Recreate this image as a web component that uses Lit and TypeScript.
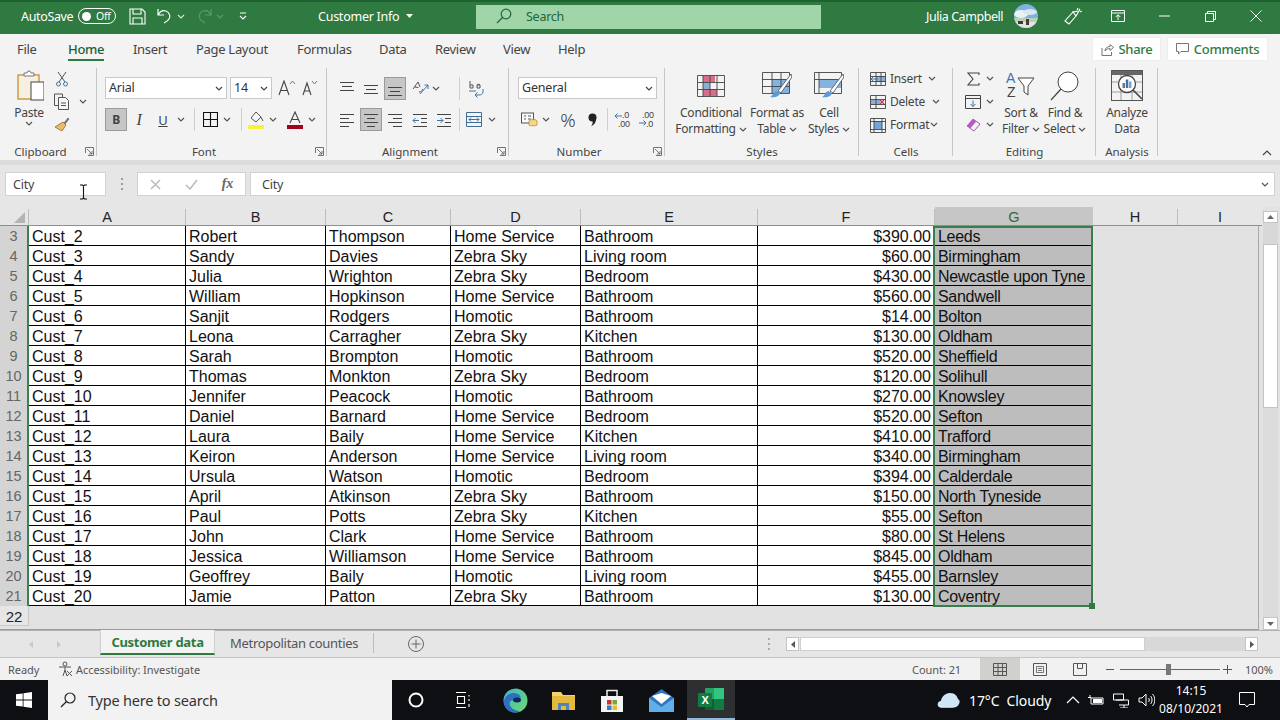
import { LitElement, html, css, svg } from "lit";
import { customElement } from "lit/decorators.js";

const G = (w: number, h: number, body: unknown, extra = "") => html`<svg class=${extra} width=${w} height=${h} viewBox="0 0 ${w} ${h}" fill="none">${body}</svg>`;
const ch = (c = "#555") => G(8, 5, svg`<path d="M1 1l3 3 3-3" stroke=${c} stroke-width="1.2"/>`);
const launcher = () => G(9, 9, svg`<path d="M.5 6V.5H8.5V8.5H3M2 2l5 5M7 4v3H4" stroke="#666" stroke-width=".9"/>`);

const rows: [string, string, string, string, string, string, string][] = [
  ["Cust_2","Robert","Thompson","Home Service","Bathroom","$390.00","Leeds"],
  ["Cust_3","Sandy","Davies","Zebra Sky","Living room","$60.00","Birmingham"],
  ["Cust_4","Julia","Wrighton","Zebra Sky","Bedroom","$430.00","Newcastle upon Tyne"],
  ["Cust_5","William","Hopkinson","Home Service","Bathroom","$560.00","Sandwell"],
  ["Cust_6","Sanjit","Rodgers","Homotic","Bathroom","$14.00","Bolton"],
  ["Cust_7","Leona","Carragher","Zebra Sky","Kitchen","$130.00","Oldham"],
  ["Cust_8","Sarah","Brompton","Homotic","Bathroom","$520.00","Sheffield"],
  ["Cust_9","Thomas","Monkton","Zebra Sky","Bedroom","$120.00","Solihull"],
  ["Cust_10","Jennifer","Peacock","Homotic","Bathroom","$270.00","Knowsley"],
  ["Cust_11","Daniel","Barnard","Home Service","Bedroom","$520.00","Sefton"],
  ["Cust_12","Laura","Baily","Home Service","Kitchen","$410.00","Trafford"],
  ["Cust_13","Keiron","Anderson","Home Service","Living room","$340.00","Birmingham"],
  ["Cust_14","Ursula","Watson","Homotic","Bedroom","$394.00","Calderdale"],
  ["Cust_15","April","Atkinson","Zebra Sky","Bathroom","$150.00","North Tyneside"],
  ["Cust_16","Paul","Potts","Zebra Sky","Kitchen","$55.00","Sefton"],
  ["Cust_17","John","Clark","Home Service","Bathroom","$80.00","St Helens"],
  ["Cust_18","Jessica","Williamson","Home Service","Bathroom","$845.00","Oldham"],
  ["Cust_19","Geoffrey","Baily","Homotic","Living room","$455.00","Barnsley"],
  ["Cust_20","Jamie","Patton","Zebra Sky","Bathroom","$130.00","Coventry"],
];

@customElement("app-root")
export class AppRoot extends LitElement {
  static styles = css`
    :host { display: block; width: 1280px; height: 720px; overflow: hidden; position: relative; background: #f3f3f3; font-family: "Noto Sans", "Open Sans", sans-serif; color: #444; font-size: 12px; letter-spacing: -.25px; }
    svg { display: block; }
    /* title bar */
    .title { height: 34px; box-sizing: border-box; border-top: 2px solid #1f6231; padding-bottom: 4px; background: #2f7a41; color: #fff; display: grid; grid-template-columns: 21px 57px 44px 30px 24px 10px 8px 22px 8px 38px 56px 158px 345px 105px 88px 24px 18px 34px 56px 36px 56px 36px; align-items: center; justify-items: start; font-size: 12.5px; letter-spacing: -.25px; }
    .title .c { justify-self: center; }
    .autosave { font-size: 12.5px; letter-spacing: -.35px; }
    .toggle { width: 38px; height: 16px; box-sizing: border-box; border: 1.3px solid #fff; border-radius: 8px; display: flex; align-items: center; gap: 5px; padding-left: 3px; font-size: 10.5px; }
    .toggle b { width: 9px; height: 9px; border-radius: 50%; background: #fff; }
    .doc { display: flex; align-items: center; gap: 7px; }
    .search { width: 345px; height: 24px; margin-top: 2px; padding-bottom: 2px; background: #9fd5a8; color: #24663a; display: flex; align-items: center; box-sizing: border-box; padding-left: 20px; gap: 14px; }
    .user { letter-spacing: -.45px; }
    /* tabs */
    .tabs { height: 32px; box-sizing: border-box; padding-bottom: 2px; display: grid; grid-template-columns: 17px 51px 65px 63px 101px 82px 56px 68px 55px 535px 75px 99px; align-items: center; justify-items: start; font-size: 13px; letter-spacing: -.3px; }
    .tab-on { color: #1f5f33; font-weight: 500; position: relative; }
    .tab-on::after { content: ""; position: absolute; left: 0; right: 0; bottom: -3px; height: 2px; background: #2f7a41; }
    .act { height: 22px; background: #fff; color: #2f7a41; display: flex; align-items: center; gap: 5px; justify-content: center; font-weight: 500; font-size: 13px; box-shadow: 0 0 1px #ccc; }
    .act.share { width: 67px; }
    .act.comm { width: 99px; }
    /* ribbon */
    .ribbon { height: 94px; display: flex; background: #f3f3f3; border-bottom: 5px solid #dcdcdc; box-sizing: content-box; position: relative; }
    .grp { display: flex; flex-direction: column; box-sizing: border-box; position: relative; }
    .grp::after { content: ""; position: absolute; right: 0; top: 2px; bottom: 4px; width: 1px; background: #c6c6c6; }
    .body { height: 77px; box-sizing: border-box; }
    .lab { height: 16px; display: flex; align-items: center; font-size: 11.5px; letter-spacing: 0; color: #444; }
    .lab span { flex: 1; text-align: center; }
    .lab i { width: 16px; display: flex; justify-content: center; }
    .w-clip { width: 97px; } .w-font { width: 230px; } .w-align { width: 182px; } .w-num { width: 156px; } .w-sty { width: 194px; } .w-cell { width: 94px; } .w-edit { width: 143px; } .w-ana { width: 62px; }
    .stack { padding-top: 11px; display: grid; grid-template-rows: 22px 22px; row-gap: 9px; }
    .row { display: grid; align-items: center; justify-items: center; height: 22px; }
    .combo { height: 22px; box-sizing: border-box; width: 100%; background: #fff; border: 1px solid #c8c8c8; display: flex; align-items: center; justify-content: space-between; padding: 0 3px 2px 3px; color: #333; font-size: 12.5px; letter-spacing: -.2px; }
    .combo svg { margin-top: 2px; }
    .on { background: #c6c6c6; border: 1px solid #9a9a9a; box-sizing: border-box; width: 22px; height: 23px; display: flex; align-items: center; justify-content: center; font-weight: 700; }
    .sep { width: 1px; height: 23px; background: #cfcfcf; }
    .fp { padding-left: 8px; }
    .f1 { grid-template-columns: 122px 3px 42px 3px 23px 23px; }
    .f2 { grid-template-columns: 22px 24px 24px 12px 14px 18px 16px 12px 18px 16px 28px 6px; }
    .ital { font-family: "Liberation Serif", serif; font-style: italic; font-size: 16px; }
    .und { text-decoration: underline; font-size: 13px; }
    .a1 { grid-template-columns: 24px 24px 24px 25px 8px 10px 18px 16px; }
    .a2 { grid-template-columns: 24px 24px 24px 25px 24px 6px 24px 12px; }
    .np { padding-left: 9px; }
    .n1 { grid-template-columns: 139px; }
    .n2 { grid-template-columns: 22px 12px 32px 16px 14px 17px 32px; }
    .pct { font-size: 19px; font-weight: 300; color: #444; line-height: 22px; letter-spacing: 0; }
    .bigs { display: flex; }
    .p-sty { padding-left: 10px; } .p-edit { padding-left: 10px; }
    .big { display: flex; flex-direction: column; align-items: center; text-align: center; line-height: 16px; color: #444; white-space: nowrap; }
    .big .ic { height: 39px; display: flex; align-items: center; justify-content: center; }
    .big .t { display: flex; align-items: center; gap: 3px; }
    .b72 { width: 72px; } .b60 { width: 60px; } .b44 { width: 44px; } .b62 { width: 62px; }
    .cellp { padding: 1px 0 0 11px; }
    .cr { display: grid; height: 23px; align-items: center; }
    .cr1 { grid-template-columns: 20px 38px 8px; }
    .cr2 { grid-template-columns: 20px 42px 8px; }
    .cr3 { grid-template-columns: 20px 40px 8px; }
    .edr { display: grid; grid-template-columns: 20px 2px 10px; height: 23px; align-items: center; justify-items: center; }
    .edsmall { width: 36px; padding-top: 1px; }
    .paste { width: 50px; margin-left: 4px; }
    .clipb { display: flex; }
    .clip-s { width: 39px; display: flex; flex-direction: column; padding-top: 1px; }
    .clip-s div { height: 23px; display: grid; grid-template-columns: 16px 9px 8px; align-items: center; justify-items: center; }
    .coll { width: 122px; display: flex; align-items: flex-end; justify-content: flex-end; padding: 0 8px 4px 0; box-sizing: border-box; }
    /* formula */
    .fbar { height: 42px; background: #e6e6e6; box-sizing: border-box; padding: 7px 5px 11px 5px; display: grid; grid-template-columns: 101px 31px 109px 4px 1025px; align-items: stretch; }
    .fbox { background: #fff; border: 1px solid #d2d2d2; display: flex; align-items: center; box-sizing: border-box; padding-left: 7px; font-size: 12.5px; color: #444; }
    .fdots { display: flex; align-items: center; justify-content: center; }
    .fx { justify-content: space-between; padding: 0 12px 0 12px; }
    .fxt { font-family: "Liberation Serif", serif; font-style: italic; font-size: 14px; font-weight: 700; color: #666; }
    .fline { justify-content: space-between; padding-right: 5px; padding-left: 11px; }
    /* sheet */
    .sheet { height: 423px; display: flex; background: #e2e2e2; position: relative; font-family: "Liberation Sans", sans-serif; color: #111; letter-spacing: 0; }
    .area { width: 1262px; }
    .colgrid { display: grid; grid-template-columns: 29px 157px 140px 125px 130px 177px 177px 158px 85px 84px; }
    .hdr { height: 19px; background: #e6e6e6; border-bottom: 1px solid #8f8f8f; box-sizing: border-box; font-size: 14.5px; line-height: 18px; text-align: center; color: #222; }
    .hdr > div { border-right: 1px solid #bdbdbd; margin-top: 2px; height: 16px; line-height: 17px; }
    .hdr > div.last { border-right: 0; }
    .hdr > div.sel { background: #c6c6c6; color: #2f6b40; margin-top: 0; height: 18px; line-height: 20px; border-right: 0; }
    .corner { display: flex; justify-content: flex-end; align-items: flex-end; padding: 0 3px 2px 0; box-sizing: border-box; }
    .rowsw { width: 1259px; height: 404px; box-sizing: border-box; border-right: 1px solid #a8a8a8; border-bottom: 1px solid #9a9a9a; }
    .r { height: 20px; grid-template-rows: 20px; font-size: 16px; line-height: 19px; white-space: nowrap; }
    .r > div { box-sizing: border-box; height: 20px; padding-top: 1px; background: #fff; border-right: 1px solid #000; border-bottom: 1px solid #000; padding-left: 3px; overflow: hidden; }
    .r > .rh { background: #d4d4d4; color: #666; border: 0; border-right: 2px solid #3f8052; padding: 1px 0 0 0; font-size: 14.5px; text-align: center; }
    .r > .num { text-align: right; padding-left: 0; padding-right: 3px; }
    .r > .g { background: #bdbdbd; overflow: visible; border-right: 0; letter-spacing: -.3px; }
    .rlast .rh22 { color: #222; font-size: 15px; text-align: center; border-right: 1px solid #c8c8c8; border-bottom: 1px solid #c8c8c8; background: #e6e6e6; }
    .selbox { position: absolute; left: 933px; top: 19px; width: 160px; height: 381px; box-sizing: border-box; border: 2px solid #3a7d4c; pointer-events: none; }
    .handle { position: absolute; right: -4px; bottom: -4px; width: 6px; height: 6px; background: #2f7a41; }
    .vs { width: 18px; display: flex; flex-direction: column; padding: 4px 2px 0 1px; box-sizing: border-box; align-items: stretch; position: relative; }
    .sbtn { background: #fff; border: 1px solid #c4c4c4; display: flex; align-items: center; justify-content: center; box-sizing: border-box; }
    .vup { height: 12px; }
    .vgap1 { height: 21px; background: #d8d8d8; }
    .vthumb { height: 164px; background: #fff; border: 1px solid #c4c4c4; box-sizing: border-box; }
    .vtrack { flex: 1; background: #dcdcdc; }
    .vdn { height: 13px; }
    /* sheet tabs */
    .stabs { height: 28px; background: #e6e6e6; border-bottom: 1px solid #c4c4c4; box-sizing: border-box; display: grid; grid-template-columns: 29px 28px 43px 115px 159px 50px 344px 18px 472px; align-items: stretch; border-top: 1px solid #b2b2b2; font-size: 13px; letter-spacing: -.3px; position: relative; }
    .stabs > * { display: flex; align-items: center; }
    .tab1 { background: #f3f3f3; color: #2f7a41; font-weight: 700; justify-content: center; border-bottom: 2px solid #2f7a41; border-left: 1px solid #cfcfcf; border-right: 1px solid #cfcfcf; height: 25px; box-sizing: border-box; margin-top: -1px; }
    .tab2 { color: #555; height: 20px; margin-top: 2px; justify-content: flex-start; padding-left: 15px; border-right: 1px solid #bcbcbc; box-sizing: border-box; }
    .add { justify-content: flex-end; }
    .hbar { height: 14px; margin-top: 6px; align-items: stretch !important; }
    .hbtn { width: 13px; }
    .hthumb { width: 345px; margin-left: 1px; background: #fff; border: 1px solid #cfcfcf; box-sizing: border-box; }
    .htrack { flex: 1; background: #d8d8d8; }
    /* status */
    .status { height: 22px; background: #f1f1f1; display: grid; grid-template-columns: 58px 18px 836px 68px 40px 40px 40px 20px 100px 14px 1fr; align-items: center; font-size: 11px; letter-spacing: -.05px; color: #555; }
    .status .pad { padding-left: 8px; }
    .status > svg { justify-self: center; }
    .status > svg.ai { justify-self: start; }
    .vb { height: 22px; display: flex; align-items: center; justify-content: center; }
    .vb.on2 { background: #d0d0cc; }
    .slider { height: 1px; background: #666; position: relative; }
    .slider i { position: absolute; left: 46px; top: -5px; width: 5px; height: 11px; background: #777; }
    .zm { margin-left: 11px; }
    /* taskbar */
    .task { height: 40px; background: #0e0f12; color: #fff; display: grid; grid-template-columns: 48px 344px 48px 46px 58px 38px 60px 38px 62px 218px 106px 14px 32px 18px 32px 58px 54px 6px; align-items: center; justify-items: center; font-size: 14px; letter-spacing: -.1px; }
    .tsearch { width: 100%; height: 40px; background: #f2f2f2; color: #333; display: flex; align-items: center; gap: 12px; padding-left: 12px; box-sizing: border-box; font-size: 14.5px; letter-spacing: -.2px; }
    .tx { height: 40px; width: 48px; background: #2e2f30; box-sizing: border-box; border-bottom: 2px solid #8fb8dc; display: flex; align-items: center; justify-content: center; }
    .wx { justify-self: end; }
    .tmp { justify-self: start; white-space: nowrap; margin-left: 9px; }
    .clock { text-align: center; font-size: 12px; line-height: 18px; white-space: nowrap; letter-spacing: 0; }
    .cursor { position: absolute; left: 79px; top: 184px; }
  `;

  private hdrs = ["A", "B", "C", "D", "E", "F", "G", "H", "I"];

  render() {
    return html`
      ${this.titleBar()}
      ${this.tabsBar()}
      ${this.ribbon()}
      ${this.formula()}
      ${this.sheet()}
      ${this.sheetTabs()}
      ${this.status()}
      ${this.task()}
      <svg class="cursor" width="9" height="16" viewBox="0 0 9 16" fill="none"><path d="M1 1h2.500l1 1 1-1H8M4.500 2v12M1 15h2.500l1-1 1 1H8" stroke="#111" stroke-width="1.100"/></svg>
    `;
  }

  titleBar() {
    const w = "#fff";
    return html`<div class="title">
      <span></span>
      <span class="autosave">AutoSave</span>
      <span class="toggle"><b></b>Off</span>
      ${G(17, 17, svg`<path d="M1 1h12l3 3v12H1zM4 1v5h8V1M4 16v-6h9v6" stroke=${w} stroke-width="1.100"/>`, "c")}
      ${G(14, 16, svg`<path d="M1 1v6h6M1.300 7C3 3 6 2 9 3c4 1.500 4.500 6 3 8-1 2-3 3-5 4" stroke=${w} stroke-width="1.200"/>`, "c")}
      <span class="c">${ch("#d5e5d8")}</span>
      <span></span>
      ${G(14, 16, svg`<path d="M13 1v6H7M12.700 7C11 3 8 2 5 3c-4 1.500-4.500 6-3 8 1 2 3 3 5 4" stroke="#5d9a6d" stroke-width="1.200"/>`, "c")}
      <span class="c">${ch("#5d9a6d")}</span>
      ${G(8, 9, svg`<path d="M1 1h6M1 4l3 3 3-3" stroke=${w} stroke-width="1.100"/>`, "c")}
      <span></span>
      <span class="doc">Customer Info ${G(7, 4, svg`<path d="M0 0h7L3.500 4z" fill="#fff"/>`)}</span>
      <span class="search">
        ${G(16, 16, svg`<circle cx="10" cy="6" r="4.800" stroke="#24663a" stroke-width="1.200"/><path d="M6.500 9.500L1 15" stroke="#24663a" stroke-width="1.200"/>`)}
        Search
      </span>
      <span></span>
      <span class="user">Julia Campbell</span>
      ${G(24, 24, svg`<defs><clipPath id="av"><circle cx="12" cy="12" r="12"/></clipPath></defs>
        <g clip-path="url(#av)"><rect width="24" height="24" fill="#7fb2dc"/><ellipse cx="7" cy="10" rx="7" ry="4" fill="#e9f1f6"/><ellipse cx="16" cy="8" rx="7" ry="3" fill="#d7e6f0"/><rect y="14" width="24" height="5" fill="#bcd0b8"/><rect y="18" width="24" height="6" fill="#e4e4de"/><rect x="4" y="17" width="5" height="3" fill="#3a3a34"/><rect x="12" y="15" width="3" height="6" fill="#4a3c30"/></g>`)}
      <span></span>
      ${G(18, 18, svg`<path d="M1 14l4 3 7-8-3-4zM9 5l3 4 3-5zM14 1l-1 2M16 5l2-1M16 2l-1 1" stroke=${w} stroke-width="1.100"/>`, "c")}
      ${G(14, 12, svg`<path d="M.5.500h13v11H.500zM.500 3h13M7 10V5M4.700 7L7 4.700 9.300 7" stroke=${w}/>`, "c")}
      ${G(11, 2, svg`<path d="M0 1h11" stroke=${w}/>`, "c")}
      ${G(11, 11, svg`<path d="M.5 2.500h8v8h-8zM2.500 2.500V.5h8v8H8.500" stroke=${w}/>`, "c")}
      ${G(12, 12, svg`<path d="M.5.500l11 11M11.500.500l-11 11" stroke=${w}/>`, "c")}
    </div>`;
  }

  tabsBar() {
    return html`<div class="tabs">
      <span></span>
      <span>File</span><span class="tab-on">Home</span><span>Insert</span><span>Page Layout</span><span>Formulas</span><span>Data</span><span>Review</span><span>View</span>
      <span>Help</span>
      <span class="act share">${G(13, 13, svg`<path d="M1 5v7.500h9.500V9M4 8c0-3 2.500-4.500 5-4.500V1.500l3.500 3-3.500 3V5.500C7 5.500 5 6.500 4 8z" stroke="#666" stroke-width=".9"/>`)}Share</span>
      <span class="act comm">${G(13, 12, svg`<path d="M.5.500h12v8H5L2.500 11V8.500h-2z" stroke="#666" stroke-width=".9"/>`)}Comments</span>
    </div>`;
  }

  ribbon() {
    return html`<div class="ribbon">
      <div class="grp w-clip">
        <div class="body clipb">
          <div class="big paste">
            <div class="ic">${G(30, 32, svg`<rect x="4" y="5" width="21" height="24" fill="#f6efe2" stroke="#d29b45" stroke-width="1.500"/><path d="M10 5V3h3l1-2h2l1 2h3v3H10z" fill="#fff" stroke="#777"/><rect x="17" y="12" width="13" height="18" fill="#fff" stroke="#444"/>`)}</div>
            <div>Paste</div>
            <div class="t">${ch()}</div>
          </div>
          <div class="clip-s">
            <div>${G(12, 16, svg`<path d="M2 1l7 10M10 1L3 11" stroke="#555"/><circle cx="2.500" cy="13" r="2" stroke="#3f74a8"/><circle cx="9.500" cy="13" r="2" stroke="#3f74a8"/>`)}</div>
            <div>${G(16, 17, svg`<path d="M4 12.500H.5V1h8v3" stroke="#555"/><path d="M4.500 4.500h7l3 3v9h-10zM7 10h5M7 12.500h5" stroke="#555" fill="#f6f6f6"/>`)}<span></span>${ch()}</div>
            <div>${G(16, 16, svg`<path d="M10 6l4-5 1 1-4 5z" fill="#777" stroke="#555" stroke-width=".6"/><path d="M9 5l3 3-4 6-7-4z" fill="#e9bd6c" stroke="#8b6a2d" stroke-width=".8"/>`)}</div>
          </div>
        </div>
        <div class="lab"><span>Clipboard</span><i>${launcher()}</i></div>
      </div>

      <div class="grp w-font">
        <div class="body stack fp">
          <div class="row f1">
            <div class="combo">Arial ${ch("#444")}</div><span></span>
            <div class="combo">14 ${ch("#444")}</div><span></span>
            ${G(18, 16, svg`<path d="M1 15L6 1l5 14M2.800 10.500h6.400" stroke="#444" stroke-width="1.100"/><path d="M12 4l2.500-3L17 4" stroke="#777"/>`)}
            ${G(17, 16, svg`<path d="M2 15L6 3l4 12M3.500 11h5" stroke="#444" stroke-width="1.100"/><path d="M11 1l2.500 3L16 1" stroke="#777"/>`)}
          </div>
          <div class="row f2">
            <div class="on">B</div>
            <span class="ital">I</span>
            <span class="und">U</span>
            ${ch()}
            <i class="sep"></i>
            ${G(15, 15, svg`<path d="M.5.500h14v14H.500zM7.500.500v14M.500 7.500h14" stroke="#111" stroke-width="1.100"/>`)}
            ${ch()}
            <i class="sep"></i>
            ${G(16, 18, svg`<path d="M3 7l5-6 5 5-5 5z" stroke="#555" fill="#f6f6f6"/><path d="M13 6l2 4" stroke="#555"/><rect y="14" width="16" height="4" fill="#f4f23a"/>`)}
            ${ch()}
            ${G(16, 18, svg`<path d="M3 12L8 1l5 11M4.800 8.500h6.400" stroke="#444" stroke-width="1.100"/><rect y="14" width="16" height="4" fill="#a4001e"/>`)}
            ${ch()}
          </div>
        </div>
        <div class="lab"><span>Font</span><i>${launcher()}</i></div>
      </div>

      <div class="grp w-align">
        <div class="body stack fp">
          <div class="row a1">
            ${G(16, 16, svg`<path d="M1 1.500h14M3 5.500h10M1 9.500h14" stroke="#444"/>`)}
            ${G(16, 16, svg`<path d="M1 4.500h14M3 8.500h10M1 12.500h14" stroke="#444"/>`)}
            <div class="on">${G(16, 16, svg`<path d="M1 6.500h14M3 10.500h10M1 14.500h14" stroke="#444"/>`)}</div>
            ${G(18, 17, svg`<path d="M2 9l5-7 2 5M3.500 7l4 .5" stroke="#555"/><path d="M8 12c2 0 3-1 4-3" stroke="#555"/><path d="M9 14L17 5M13.500 5H17V9" stroke="#3f74a8"/>`)}
            ${ch()}
            <span></span>
            <i class="sep"></i>
            ${G(16, 18, svg`<path d="M2 1v7M2 5h3v3H2M9 5h3v3H9M9 8V5c0-1 3-1 3 0" stroke="#555"/><path d="M1 11h7M15 9v3c0 2-2 3-4 3H7M9.500 12.500L7 15l2.500 2.500" stroke="#3f74a8"/>`)}
          </div>
          <div class="row a2">
            ${G(16, 14, svg`<path d="M1 1.500h14M1 5.500h9M1 9.500h14M1 13.500h9" stroke="#444"/>`)}
            <div class="on">${G(16, 14, svg`<path d="M1 1.500h14M4 5.500h8M1 9.500h14M4 13.500h8" stroke="#444"/>`)}</div>
            ${G(16, 14, svg`<path d="M1 1.500h14M6 5.500h9M1 9.500h14M6 13.500h9" stroke="#444"/>`)}
            ${G(16, 14, svg`<path d="M1 1.500h14M9 5.500h6M9 9.500h6M1 13.500h14" stroke="#444"/><path d="M7 7.500H1M3.500 5L1 7.500 3.500 10" stroke="#3f74a8"/>`)}
            ${G(16, 14, svg`<path d="M1 1.500h14M9 5.500h6M9 9.500h6M1 13.500h14" stroke="#444"/><path d="M1 7.500h6M4.500 5L7 7.500 4.500 10" stroke="#3f74a8"/>`)}
            <i class="sep"></i>
            ${G(16, 15, svg`<path d="M.5.500h15v14H.500zM.500 4.500h15M.500 10.500h15" stroke="#3f6f98"/><path d="M3 7.500h10M5 5.500l-2 2 2 2M11 5.500l2 2-2 2" stroke="#3f74a8"/>`)}
            ${ch()}
          </div>
        </div>
        <div class="lab"><span>Alignment</span><i>${launcher()}</i></div>
      </div>

      <div class="grp w-num">
        <div class="body stack np">
          <div class="row n1"><div class="combo">General ${ch("#444")}</div></div>
          <div class="row n2">
            ${G(17, 15, svg`<rect x=".5" y="1" width="12" height="10" stroke="#555" fill="#fafafa"/><path d="M3 4h2M3 7h2M7 4h3M7 7h3" stroke="#555"/><ellipse cx="12" cy="9" rx="4" ry="1.500" fill="#f4d58a" stroke="#c98a1c" stroke-width=".8"/><path d="M8 9v4c0 1 8 1 8 0V9" fill="#f4d58a" stroke="#c98a1c" stroke-width=".8"/>`)}
            ${ch()}
            <span class="pct">%</span>
            ${G(9, 14, svg`<circle cx="4.500" cy="4.500" r="4" fill="#222"/><path d="M8 5c.5 4-2 7-5 8.500 1.500-2 2-4 1.500-6z" fill="#222"/>`)}
            <i class="sep"></i>
            ${G(20, 20, svg`<path d="M9 6H2M4.500 3.500L2 6l2.500 2.500" stroke="#3f74a8"/><text x="9" y="8" font-size="9" fill="#444" font-family="Liberation Sans">.0</text><text x="5" y="17" font-size="9" fill="#444" font-family="Liberation Sans">.00</text>`)}
            ${G(20, 20, svg`<text x="5" y="8" font-size="9" fill="#444" font-family="Liberation Sans">.00</text><path d="M2 13h7M6.500 10.500L9 13l-2.500 2.500" stroke="#3f74a8"/><text x="9" y="17" font-size="9" fill="#444" font-family="Liberation Sans">.0</text>`)}
          </div>
        </div>
        <div class="lab"><span>Number</span><i>${launcher()}</i></div>
      </div>

      <div class="grp w-sty">
        <div class="body bigs p-sty">
          <div class="big b72">
            <div class="ic">${G(28, 22, svg`<rect x="6" y="1" width="12" height="6" fill="#d96d8c"/><rect x="6" y="7" width="7" height="7" fill="#8ab0d8"/><rect x="6" y="14" width="14" height="7" fill="#d96d8c"/><path d="M.5.500h27v21H.500zM6 .5v21M13 .5v21M20 .5v21M.500 7.500h27M.500 14.500h27" stroke="#444" stroke-width=".9"/>`)}</div>
            <div>Conditional</div><div class="t">Formatting ${ch()}</div>
          </div>
          <div class="big b60">
            <div class="ic">${G(30, 27, svg`<rect x="10" y="7" width="18" height="14" fill="#85b3e0"/><path d="M.5.500h27v21H.500zM.500 7.500h27M.500 14.500h27M10 .5v21M19 .5v21" stroke="#444" stroke-width=".9"/><path d="M29 2L16 19l3 2L30 5z" fill="#fff" stroke="#5a6a78"/><path d="M14 19c-3 1-3 5-6 6 4 1 9 0 10-4z" fill="#5d9ad4"/>`)}</div>
            <div>Format as</div><div class="t">Table ${ch()}</div>
          </div>
          <div class="big b44">
            <div class="ic">${G(30, 27, svg`<rect x="5" y="7" width="23" height="9" fill="#85b3e0"/><path d="M.5.500h27v21H.500zM.500 7.500h27M5 .5v21" stroke="#444" stroke-width=".9"/><path d="M29 2L16 19l3 2L30 5z" fill="#fff" stroke="#5a6a78"/><path d="M14 19c-3 1-3 5-6 6 4 1 9 0 10-4z" fill="#5d9ad4"/>`)}</div>
            <div>Cell</div><div class="t">Styles ${ch()}</div>
          </div>
        </div>
        <div class="lab"><span>Styles</span></div>
      </div>

      <div class="grp w-cell">
        <div class="body cellp">
          <div class="cr cr1">${G(16, 14, svg`<rect x="6" y="4" width="9" height="6" fill="#8ab0d8"/><path d="M.5.500h15v13H.500zM.500 4.500h15M.500 9.500h15M6 .5v13M11 .5v13" stroke="#444" stroke-width=".9"/><path d="M8 7H1M3.500 4.500L1 7l2.500 2.500" stroke="#3f74a8"/>`)}<span>Insert</span>${ch()}</div>
          <div class="cr cr2">${G(16, 14, svg`<rect x="1" y="5" width="9" height="4" fill="#8ab0d8"/><path d="M.5.500h15v13H.500zM.500 4.500h15M.500 9.500h15M6 .5v13" stroke="#444" stroke-width=".9"/><path d="M10 5l4 4M14 5l-4 4" stroke="#c0355a" stroke-width="1.200"/>`)}<span>Delete</span>${ch()}</div>
          <div class="cr cr3">${G(16, 16, svg`<rect x="4" y="4" width="8" height="8" fill="#6fa6dc"/><path d="M.5 1.500h15v14H.500zM.500 4.500h15M.500 12.500h15M4 1.500v14M12 1.500v14" stroke="#444" stroke-width=".9"/>`)}<span>Format</span>${ch()}</div>
        </div>
        <div class="lab"><span>Cells</span></div>
      </div>

      <div class="grp w-edit">
        <div class="body bigs p-edit">
          <div class="edsmall">
            <div class="edr">${G(13, 14, svg`<path d="M12 3V1H1l5 6-5 6h11v-2" stroke="#444" stroke-width="1.100"/>`)}<span></span>${ch()}</div>
            <div class="edr">${G(16, 14, svg`<path d="M.5.500h15v13H.500zM.500 3.500h15" stroke="#444"/><path d="M8 5.500v6M5.500 9L8 11.500 10.500 9" stroke="#3f74a8"/>`)}<span></span>${ch()}</div>
            <div class="edr">${G(15, 14, svg`<path d="M7 1l7 5-6 7-7-5z" fill="#b45fc0" stroke="#8f3e9c" stroke-width=".6"/><path d="M10 3.200l4 2.800-6 7-4-2.800z" fill="#f6eef8" stroke="#8f3e9c" stroke-width=".6"/>`)}<span></span>${ch()}</div>
          </div>
          <div class="big b44">
            <div class="ic">${G(30, 32, svg`<text x="0" y="13" font-size="14" fill="#3f74a8" font-family="Liberation Sans">A</text><text x="1" y="27" font-size="14" fill="#444" font-family="Liberation Sans">Z</text><path d="M12 8h16l-6 8v9l-4-3v-6z" stroke="#444" fill="#fff"/>`)}</div>
            <div>Sort &amp;</div><div class="t">Filter ${ch()}</div>
          </div>
          <div class="big b44">
            <div class="ic">${G(30, 30, svg`<circle cx="18" cy="11" r="10" stroke="#444" fill="#fff"/><path d="M11 18L1 29" stroke="#444" stroke-width="1.200"/>`)}</div>
            <div>Find &amp;</div><div class="t">Select ${ch()}</div>
          </div>
        </div>
        <div class="lab"><span>Editing</span></div>
      </div>

      <div class="grp w-ana">
        <div class="body bigs">
          <div class="big b62">
            <div class="ic">${G(33, 32, svg`<rect x=".5" y=".5" width="31" height="30" fill="#f3f3f3" stroke="#555"/><rect x="1" y="1" width="30" height="4" fill="#666"/><path d="M1 12h30M1 22h30M10 5v25M21 5v25" stroke="#888" stroke-width=".8"/><circle cx="16" cy="14" r="8.500" fill="#fff" stroke="#444" stroke-width="1.300"/><rect x="11.500" y="13" width="2.500" height="5" fill="#777"/><rect x="14.800" y="9.500" width="2.500" height="8.500" fill="#3f74a8"/><rect x="18" y="11.500" width="2.500" height="6.500" fill="#6fa6dc"/><path d="M22 20l9 9" stroke="#444" stroke-width="1.600"/>`)}</div>
            <div>Analyze</div><div>Data</div>
          </div>
        </div>
        <div class="lab"><span>Analysis</span></div>
      </div>

      <div class="coll">${G(10, 6, svg`<path d="M1 5l4-4 4 4" stroke="#444" stroke-width="1.200"/>`)}</div>
    </div>`;
  }

  formula() {
    return html`<div class="fbar">
      <div class="fbox">City</div>
      <div class="fdots">${G(2, 12, svg`<path d="M1 0v2M1 5v2M1 10v2" stroke="#999" stroke-width="2"/>`)}</div>
      <div class="fbox fx">
        ${G(11, 11, svg`<path d="M1 1l9 9M10 1l-9 9" stroke="#bdbdbd" stroke-width="1.600"/>`)}
        ${G(13, 11, svg`<path d="M1 6l4 4 7-9" stroke="#bdbdbd" stroke-width="1.600"/>`)}
        <span class="fxt">fx</span>
      </div>
      <span></span>
      <div class="fbox fline">City ${ch("#555")}</div>
    </div>`;
  }

  sheet() {
    return html`<div class="sheet">
      <div class="area">
        <div class="colgrid hdr">
          <div class="corner">${G(11, 11, svg`<path d="M11 0v11H0z" fill="#b4b4b4"/>`)}</div>
          ${this.hdrs.map((h) => html`<div class=${h === "G" ? "sel" : h === "I" ? "last" : ""}>${h}</div>`)}
        </div>
        <div class="rowsw">
          ${rows.map((r, i) => html`<div class="colgrid r">
            <div class="rh">${i + 3}</div>
            ${r.map((c, j) => html`<div class=${j === 5 ? "num" : j === 6 ? "g" : ""}>${c}</div>`)}
          </div>`)}
          <div class="colgrid r rlast"><div class="rh22 rh">22</div></div>
        </div>
      </div>
      <div class="vs">
        <div class="sbtn vup">${G(7, 4, svg`<path d="M3.500 0L7 4H0z" fill="#666"/>`)}</div>
        <div class="vgap1"></div>
        <div class="vthumb"></div>
        <div class="vtrack"></div>
        <div class="sbtn vdn">${G(7, 4, svg`<path d="M3.500 4L7 0H0z" fill="#666"/>`)}</div>
      </div>
      <div class="selbox"><div class="handle"></div></div>
    </div>`;
  }

  sheetTabs() {
    return html`<div class="stabs">
      <span></span>
      <span>${G(4, 7, svg`<path d="M0 3.500L4 0v7z" fill="#c8c8c8"/>`)}</span>
      <span>${G(4, 7, svg`<path d="M4 3.500L0 0v7z" fill="#c8c8c8"/>`)}</span>
      <span class="tab1">Customer data</span>
      <span class="tab2">Metropolitan counties</span>
      <span class="add">${G(16, 16, svg`<circle cx="8" cy="8" r="7.500" stroke="#666"/><path d="M8 3.500v9M3.500 8h9" stroke="#666"/>`)}</span>
      <span></span>
      <span>${G(2, 12, svg`<path d="M1 0v2M1 5v2M1 10v2" stroke="#aaa" stroke-width="2"/>`)}</span>
      <div class="hbar">
        <div class="sbtn hbtn">${G(4, 7, svg`<path d="M0 3.500L4 0v7z" fill="#555"/>`)}</div>
        <div class="hthumb"></div>
        <div class="htrack"></div>
        <div class="sbtn hbtn">${G(4, 7, svg`<path d="M4 3.500L0 0v7z" fill="#555"/>`)}</div>
      </div>
    </div>`;
  }

  status() {
    return html`<div class="status">
      <span class="pad">Ready</span>
      ${G(15, 16, svg`<circle cx="7" cy="3" r="2" stroke="#555"/><path d="M1 6h12M7 6v3M5 15l2-6 2 6" stroke="#555"/><path d="M9 10l5 5M14 10l-5 5" stroke="#555"/>`, "ai")}
      <span>Accessibility: Investigate</span>
      <span>Count: 21</span>
      <span class="vb on2">${G(14, 13, svg`<path d="M.5.500h13v12H.500zM.500 4.500h13M.500 8.500h13M5 .5v12M9.500 .5v12" stroke="#555"/>`)}</span>
      <span class="vb">${G(14, 13, svg`<path d="M.5.500h13v12H.500z" stroke="#555"/><path d="M3.500 3.500h7v6h-7zM5 5.500h4M5 7.500h4" stroke="#555" stroke-width=".8"/>`)}</span>
      <span class="vb">${G(14, 13, svg`<path d="M.5.500h13v12H.500zM4.500 .5v5h5v-5" stroke="#555"/>`)}</span>
      ${G(8, 1, svg`<path d="M0 .5h8" stroke="#555"/>`)}
      <span class="slider"><i></i></span>
      ${G(9, 9, svg`<path d="M0 4.500h9M4.500 0v9" stroke="#555"/>`)}
      <span class="zm">100%</span>
    </div>`;
  }

  task() {
    return html`<div class="task">
      ${G(16, 16, svg`<path d="M0 2.300l6.700-.9V7.600H0zM7.500 1.300L16 0v7.600H7.500zM0 8.400h6.700v6.200L0 13.700zM7.500 8.400H16V16l-8.500-1.200z" fill="#fff"/>`)}
      <div class="tsearch">
        ${G(16, 16, svg`<circle cx="10" cy="6" r="5" stroke="#222" stroke-width="1.200"/><path d="M6.500 9.500L1 15" stroke="#222" stroke-width="1.200"/>`)}
        Type here to search
      </div>
      ${G(16, 16, svg`<circle cx="8" cy="8" r="6.500" stroke="#fff" stroke-width="2"/>`)}
      ${G(16, 16, svg`<path d="M1 .5h10M2.500 4.500h7v7h-7zM1 15.500h10M14 3v1.500M14 7v2M14 12v3" stroke="#fff" stroke-width="1.100"/>`)}
      ${G(25, 25, svg`<defs><linearGradient id="ed" x1="0" y1="0" x2="1" y2="1"><stop offset="0" stop-color="#3fb5c9"/><stop offset="1" stop-color="#6fdc6c"/></linearGradient></defs><circle cx="12.500" cy="12.500" r="12" fill="url(#ed)"/><path d="M1 14C1 7 9 3 15 6c4 2 3 7 0 7-4 0-6-2-8 1-2 4 3 9 10 9-2 1-3 1.500-5 1.500C6 24.500 1 20 1 14z" fill="#2f6fc0"/><ellipse cx="14" cy="12" rx="4" ry="2.500" fill="#0e2a5a"/>`)}
      ${G(23, 20, svg`<path d="M0 2h9l2 3h12v15H0z" fill="#f4d36a"/><path d="M0 6h23v14H0z" fill="#e4b93f"/><path d="M6 20v-7h11v7h-3v-4H9v4z" fill="#4f83b8"/>`)}
      ${G(24, 24, svg`<path d="M1 8h22v16H1z" fill="#f4f4f4"/><path d="M7 9V2.500h10V9" stroke="#eee" stroke-width="1.500"/><rect x="7" y="12" width="4.500" height="4.500" fill="#c9352b"/><rect x="12.500" y="12" width="4.500" height="4.500" fill="#7da33b"/><rect x="7" y="17.500" width="4.500" height="4.500" fill="#2d7fc9"/><rect x="12.500" y="17.500" width="4.500" height="4.500" fill="#eeb82c"/>`)}
      ${G(25, 23, svg`<path d="M0 9L12.500 0 25 9v14H0z" fill="#2f75c4"/><path d="M0 9l12.500 9L25 9v14H0z" fill="#62aee6"/><path d="M3 7l9.500-3L22 7l-9.500 8z" fill="#fff"/>`)}
      <div class="tx">${G(26, 22, svg`<rect x="7" y="0" width="19" height="22" rx="1" fill="#21a366"/><rect x="16" y="0" width="10" height="11" fill="#33c481"/><rect x="16" y="11" width="10" height="11" fill="#107c41"/><rect x="7" y="11" width="9" height="11" fill="#185c37"/><rect x="0" y="5" width="14" height="14" rx="1" fill="#107c41"/><text x="3.500" y="16" font-size="11" font-weight="700" fill="#fff" font-family="Liberation Sans">X</text>`)}</div>
      <span class="wx">${G(23, 16, svg`<path d="M4 15.500C1 15.500 0 13 1 11c.5-1.500 2-2 3-2 .5-4 4-8 9-8s7 3 8 6c2 1 2 3 1 5-1 2-3 3.500-5 3.500z" fill="#cfe6f5"/><path d="M2 14c3 1 10 1.500 16 .5-2 1-3 1-5 1H4z" fill="#fff"/>`)}</span>
      <span class="tmp">17°C&nbsp;&nbsp;Cloudy</span>
      ${G(14, 8, svg`<path d="M1 7l6-6 6 6" stroke="#fff" stroke-width="1.200"/>`)}
      ${G(16, 11, svg`<path d="M3 3h12v6H3z" stroke="#fff"/><rect x="5" y="4" width="9" height="4" fill="#fff"/><path d="M0 2.500h3M2 0v3" stroke="#fff"/>`)}
      ${G(16, 15, svg`<path d="M.5 1h10v6H.500zM3 7h12.500v5H6M11 12v3M7 15h8" stroke="#fff"/>`)}
      ${G(17, 14, svg`<path d="M1 5h3l4-4v12L4 9H1zM10.500 5c1 1 1 3 0 4M12.500 3c2 2 2 6 0 8M14.500 1c3 3 3 9 0 12" stroke="#fff"/>`)}
      <div class="clock"><div>14:15</div><div>08/10/2021</div></div>
      ${G(16, 16, svg`<path d="M.5.500h15v12H10l-2 2.500L6 12.500H.500z" stroke="#fff"/>`)}
    </div>`;
  }
}
